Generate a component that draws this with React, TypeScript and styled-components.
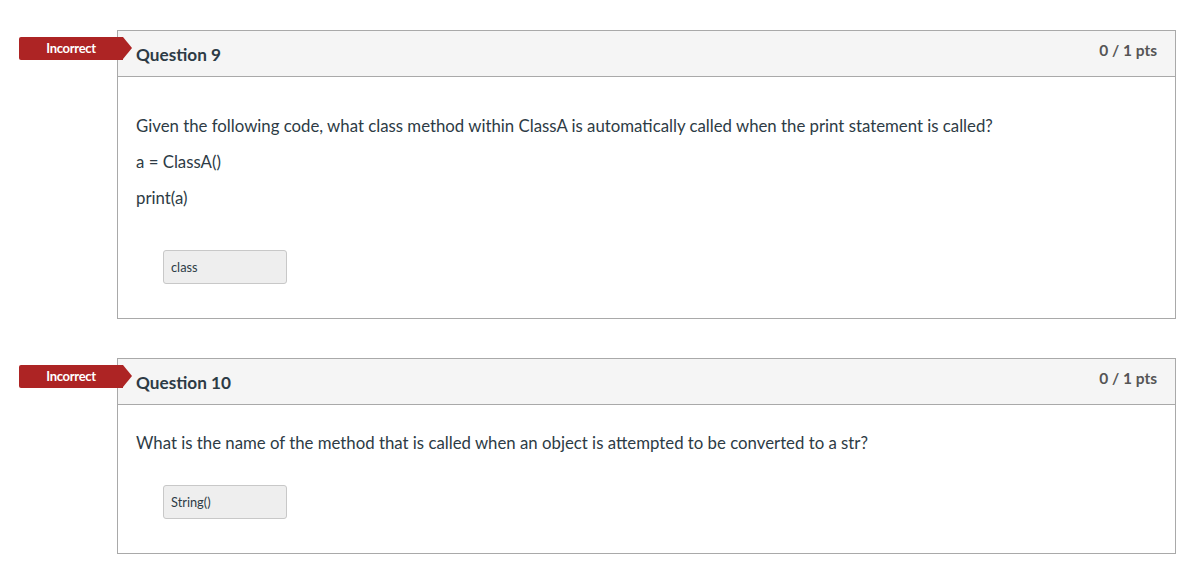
import React from "react";
import styled, { createGlobalStyle } from "styled-components";

const Global = createGlobalStyle`
  html, body { margin: 0; padding: 0; background: #fff; }
  body { font-family: Lato, "Noto Sans", "Liberation Sans", sans-serif; color: #2d3b45; }
  * { box-sizing: border-box; }
`;

const Page = styled.div`
  padding: 30px 5px 12px 117px;
  display: flex;
  flex-direction: column;
  gap: 39px;
`;

const Card = styled.section`
  position: relative;
  border: 1px solid #a9a9a9;
  background: #fff;
`;

const Badge = styled.div`
  position: absolute;
  left: -99px;
  top: 6px;
  width: 104px;
  height: 23px;
  background: #ad2424;
  color: #fff;
  font-size: 13px;
  font-weight: 700;
  letter-spacing: -0.3px;
  display: flex;
  align-items: center;
  justify-content: center;
  border-radius: 2px 0 0 2px;
  padding-bottom: 1px;
  &::after {
    content: "";
    position: absolute;
    right: -9px;
    top: 0;
    border-top: 11.5px solid transparent;
    border-bottom: 11.5px solid transparent;
    border-left: 9px solid #ad2424;
  }
`;

const Header = styled.header`
  height: 46px;
  background: #f5f5f5;
  border-bottom: 1px solid #a9a9a9;
  display: flex;
  justify-content: space-between;
  align-items: flex-start;
  padding: 0 18px 0 18px;
`;

const Title = styled.h2`
  margin: 0;
  padding-top: 14px;
  font-size: 17.2px;
  line-height: 20px;
  font-weight: 700;
  color: #2d3b45;
`;

const Points = styled.div`
  padding-top: 9px;
  font-size: 15.5px;
  line-height: 20px;
  font-weight: 700;
  color: #555;
`;

const Body = styled.div<{ $top: number }>`
  padding: ${(p) => p.$top}px 18px 34px 18px;
`;

const Para = styled.p`
  margin: 0 0 12px;
  font-size: 16.8px;
  line-height: 24px;
  color: #2d3b45;
  &:last-child { margin-bottom: 0; }
`;

const Answers = styled.div<{ $gap: number }>`
  margin-top: ${(p) => p.$gap}px;
  padding-left: 27px;
`;

const AnswerBox = styled.div`
  width: 124px;
  height: 34px;
  background: #eee;
  border: 1px solid #c8c8c8;
  border-radius: 3px;
  display: flex;
  align-items: center;
  padding-left: 7px;
  font-size: 12.8px;
  color: #2d3b45;
`;

type Q = { title: string; lines: string[]; answer: string; top: number; gap: number };

const questions: Q[] = [
  {
    title: "Question 9",
    lines: [
      "Given the following code, what class method within ClassA is automatically called when the print statement is called?",
      "a = ClassA()",
      "print(a)",
    ],
    answer: "class",
    top: 37,
    gap: 40,
  },
  {
    title: "Question 10",
    lines: ["What is the name of the method that is called when an object is attempted to be converted to a str?"],
    answer: "String()",
    top: 26,
    gap: 30,
  },
];

export default function App() {
  return (
    <>
      <Global />
      <Page>
        {questions.map((q) => (
          <Card key={q.title}>
            <Badge>Incorrect</Badge>
            <Header>
              <Title>{q.title}</Title>
              <Points>0 / 1 pts</Points>
            </Header>
            <Body $top={q.top}>
              <div>
                {q.lines.map((l) => (
                  <Para key={l}>{l}</Para>
                ))}
              </div>
              <Answers $gap={q.gap}>
                <AnswerBox>{q.answer}</AnswerBox>
              </Answers>
            </Body>
          </Card>
        ))}
      </Page>
    </>
  );
}
